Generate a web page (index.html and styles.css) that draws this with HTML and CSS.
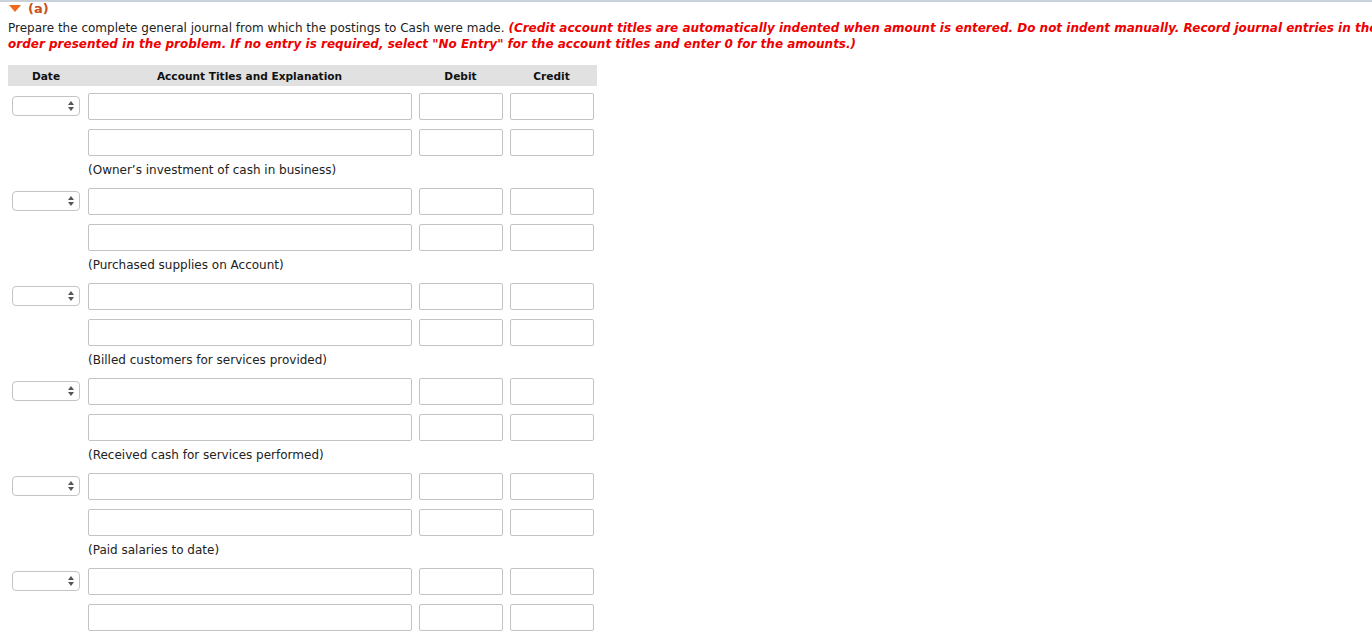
FILE: index.html
```html
<!DOCTYPE html>
<html>
<head>
<meta charset="utf-8">
<link rel="stylesheet" href="styles.css">
</head>
<body>
<div class="page">
  <div class="part-head">
    <span class="caret"></span><span class="part-label">(a)</span>
  </div>
  <p class="prompt">Prepare the complete general journal from which the postings to Cash were made. <em class="note">(Credit account titles are automatically indented when amount is entered. Do not indent manually. Record journal entries in the<br>order presented in the problem. If no entry is required, select "No Entry" for the account titles and enter 0 for the amounts.)</em></p>

  <div class="journal">
    <div class="jhead">
      <div class="hc">Date</div>
      <div class="hc">Account Titles and Explanation</div>
      <div class="hc">Debit</div>
      <div class="hc">Credit</div>
    </div>

    <div class="group">
      <div class="row"><div class="cell"><div class="sel"><span class="arr"></span></div></div><div class="cell"><div class="inp acct"></div></div><div class="cell"><div class="inp amt"></div></div><div class="cell"><div class="inp amt"></div></div></div>
      <div class="row"><div class="cell"></div><div class="cell"><div class="inp acct"></div></div><div class="cell"><div class="inp amt"></div></div><div class="cell"><div class="inp amt"></div></div></div>
      <div class="expl">(Owner’s investment of cash in business)</div>
    </div>

    <div class="group">
      <div class="row"><div class="cell"><div class="sel"><span class="arr"></span></div></div><div class="cell"><div class="inp acct"></div></div><div class="cell"><div class="inp amt"></div></div><div class="cell"><div class="inp amt"></div></div></div>
      <div class="row"><div class="cell"></div><div class="cell"><div class="inp acct"></div></div><div class="cell"><div class="inp amt"></div></div><div class="cell"><div class="inp amt"></div></div></div>
      <div class="expl">(Purchased supplies on Account)</div>
    </div>

    <div class="group">
      <div class="row"><div class="cell"><div class="sel"><span class="arr"></span></div></div><div class="cell"><div class="inp acct"></div></div><div class="cell"><div class="inp amt"></div></div><div class="cell"><div class="inp amt"></div></div></div>
      <div class="row"><div class="cell"></div><div class="cell"><div class="inp acct"></div></div><div class="cell"><div class="inp amt"></div></div><div class="cell"><div class="inp amt"></div></div></div>
      <div class="expl">(Billed customers for services provided)</div>
    </div>

    <div class="group">
      <div class="row"><div class="cell"><div class="sel"><span class="arr"></span></div></div><div class="cell"><div class="inp acct"></div></div><div class="cell"><div class="inp amt"></div></div><div class="cell"><div class="inp amt"></div></div></div>
      <div class="row"><div class="cell"></div><div class="cell"><div class="inp acct"></div></div><div class="cell"><div class="inp amt"></div></div><div class="cell"><div class="inp amt"></div></div></div>
      <div class="expl">(Received cash for services performed)</div>
    </div>

    <div class="group">
      <div class="row"><div class="cell"><div class="sel"><span class="arr"></span></div></div><div class="cell"><div class="inp acct"></div></div><div class="cell"><div class="inp amt"></div></div><div class="cell"><div class="inp amt"></div></div></div>
      <div class="row"><div class="cell"></div><div class="cell"><div class="inp acct"></div></div><div class="cell"><div class="inp amt"></div></div><div class="cell"><div class="inp amt"></div></div></div>
      <div class="expl">(Paid salaries to date)</div>
    </div>

    <div class="group">
      <div class="row"><div class="cell"><div class="sel"><span class="arr"></span></div></div><div class="cell"><div class="inp acct"></div></div><div class="cell"><div class="inp amt"></div></div><div class="cell"><div class="inp amt"></div></div></div>
      <div class="row"><div class="cell"></div><div class="cell"><div class="inp acct"></div></div><div class="cell"><div class="inp amt"></div></div><div class="cell"><div class="inp amt"></div></div></div>
    </div>
  </div>
</div>
</body>
</html>
```

FILE: styles.css
```css
html, body {
  margin: 0;
  padding: 0;
  background: #fff;
  overflow: hidden;
}
body {
  font-family: "DejaVu Sans", Verdana, sans-serif;
  color: #222;
  border-top: 2px solid #c9d1da;
}
.page {
  padding: 0 8px;
}
.part-head {
  display: flex;
  align-items: center;
  height: 13px;
}
.caret {
  width: 0;
  height: 0;
  border-left: 6px solid transparent;
  border-right: 6px solid transparent;
  border-top: 7px solid #f06a1e;
  margin: 0 7px 0 1px;
}
.part-label {
  font-weight: bold;
  font-size: 13px;
  color: #c9501a;
}
.prompt {
  margin: 5px 0 0 0;
  font-size: 12px;
  line-height: 16px;
  white-space: nowrap;
}
.note {
  color: #ee0000;
  font-weight: bold;
  font-style: italic;
}
.journal {
  margin-top: 13px;
  width: 589px;
}
.jhead {
  display: grid;
  grid-template-columns: 76px 331px 91px 91px;
  background: #e1e1e1;
  height: 21px;
  align-items: center;
}
.hc {
  font-size: 10.6px;
  font-weight: bold;
  text-align: center;
  color: #111;
}
.group {
  padding-top: 7px;
}
.group + .group {
  padding-top: 0;
}
.row {
  display: grid;
  grid-template-columns: 76px 331px 91px 91px;
  height: 27px;
  align-items: center;
  margin-bottom: 9px;
}
.row + .row + .expl {
  margin-top: -9px;
}
.cell {
  padding-left: 4px;
  display: flex;
  align-items: center;
}
.inp {
  height: 27px;
  box-sizing: border-box;
  border: 1px solid #c3c3c3;
  border-radius: 2px;
  background: #fff;
}
.acct { width: 324px; }
.amt { width: 84px; }
.sel {
  width: 68px;
  height: 20px;
  box-sizing: border-box;
  border: 1px solid #c4c4c4;
  border-radius: 4px;
  background: #fff;
  position: relative;
  margin-top: -1px;
}
.arr {
  position: absolute;
  right: 5px;
  top: 4px;
  width: 0;
  height: 0;
  border-left: 3.5px solid transparent;
  border-right: 3.5px solid transparent;
  border-bottom: 4px solid #555;
}
.arr::after {
  content: "";
  position: absolute;
  left: -3.5px;
  top: 6px;
  border-left: 3.5px solid transparent;
  border-right: 3.5px solid transparent;
  border-top: 4px solid #555;
}
.expl {
  font-size: 12px;
  line-height: 16px;
  padding: 6px 0 10px 88px;
  margin-left: -8px;
}
.row:last-child {
  margin-bottom: 0;
}
```
